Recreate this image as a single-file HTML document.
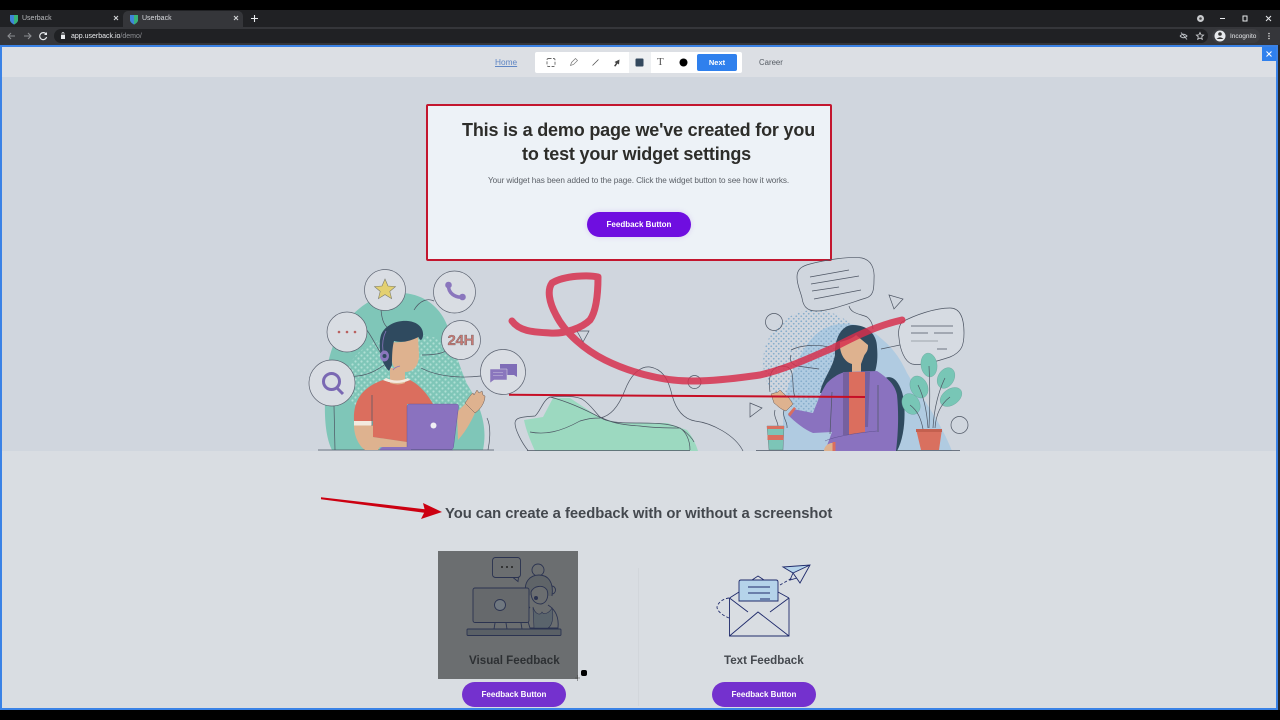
<!DOCTYPE html>
<html><head><meta charset="utf-8"><title>Userback</title>
<style>
html,body{margin:0;padding:0;width:1280px;height:720px;overflow:hidden;background:#000;font-family:"Liberation Sans",sans-serif}
.a{position:absolute}
.t{position:absolute;white-space:nowrap}
svg{position:absolute;left:0;top:0}
.l{fill:none;stroke:#4d5563;stroke-width:.7}
.b{position:absolute;border-radius:13px;color:#fff;font-weight:bold;font-size:8px;text-align:center;line-height:25px;width:104px;height:25px}
</style></head><body>
<div class="a" style="left:0;top:10px;width:1280px;height:17px;background:#202124"></div>
<div class="a" style="left:123px;top:11px;width:120px;height:16px;background:#35363a;border-radius:5px 5px 0 0"></div>
<div class="a" style="left:0;top:27px;width:1280px;height:18px;background:#35363a"></div>
<div class="a" style="left:54px;top:29px;width:1154px;height:14px;background:#202124;border-radius:7px"></div>
<div class="a" style="left:1212px;top:29px;width:48px;height:14px;background:#3c3d41;border-radius:7px"></div>
<div class="t" style="left:22px;top:15px;font-size:7px;color:#b8babd">Userback</div>
<div class="t" style="left:142px;top:15px;font-size:7px;color:#dadce0">Userback</div>
<div class="t" style="left:71px;top:33px;font-size:7px;color:#e8eaed">app.userback.io<span style="color:#8f9296">/demo/</span></div>
<div class="t" style="left:1230px;top:33px;font-size:6.500px;color:#e8eaed">Incognito</div>

<div class="a" style="left:0;top:45px;width:1278px;height:665px;background:#3a82e6"></div>
<div class="a" style="left:2px;top:47px;width:1274px;height:30px;background:#dcdfe4"></div>
<div class="a" style="left:2px;top:77px;width:1274px;height:374px;background:#d0d6de"></div>
<div class="a" style="left:2px;top:451px;width:1274px;height:257px;background:#d9dde2"></div>
<div class="a" style="left:1278px;top:45px;width:2px;height:665px;background:#26282c"></div>
<div class="a" style="left:1262px;top:47px;width:14px;height:14px;background:#2f80ed"></div>

<div class="t" style="left:495px;top:57px;font-size:8.300px;color:#5f86c4;text-decoration:underline">Home</div>
<div class="t" style="left:759px;top:57.500px;font-size:7.800px;color:#555b63">Career</div>
<div class="a" style="left:535px;top:52px;width:207px;height:21px;background:#fff;border-radius:2px"></div>
<div class="a" style="left:629px;top:52px;width:22px;height:21px;background:#eef0f2"></div>
<div class="a" style="left:697px;top:54px;width:40px;height:17px;background:#2f80ed;border-radius:2px;color:#fff;font-weight:bold;font-size:7.500px;text-align:center;line-height:17px">Next</div>
<div class="t" style="left:657px;top:56px;font-size:11px;color:#555;font-family:'Liberation Serif',serif">T</div>

<div class="a" style="left:426px;top:104px;width:401.500px;height:152.500px;background:#edf2f7;border:2px solid #c3162e;border-radius:2px"></div>
<div class="t" style="left:462px;top:120px;font-size:18px;font-weight:bold;color:#2d2d2a;letter-spacing:-.18px">This is a demo page we've created for you</div>
<div class="t" style="left:522px;top:144px;font-size:18px;font-weight:bold;color:#2d2d2a;letter-spacing:-.18px">to test your widget settings</div>
<div class="t" style="left:488px;top:176px;font-size:8.200px;color:#5a5f66;letter-spacing:-.08px">Your widget has been added to the page. Click the widget button to see how it works.</div>
<div class="b" style="left:587px;top:212px;background:#6f0ee0;box-shadow:0 0 6px rgba(111,14,224,.15)">Feedback Button</div>

<div class="t" style="left:445px;top:506px;font-size:14.800px;font-weight:bold;color:#44484e;letter-spacing:-.04px">You can create a feedback with or without a screenshot</div>

<svg width="1280" height="720" viewBox="0 0 1280 720">
<defs>
<pattern id="dl" width="6" height="6" patternUnits="userSpaceOnUse"><circle cx="1.500" cy="1.500" r="1.100" fill="#afdfd4"/><circle cx="4.500" cy="4.500" r="1.100" fill="#afdfd4"/></pattern>
<pattern id="dr" width="5" height="5" patternUnits="userSpaceOnUse"><circle cx="1.250" cy="1.250" r=".9" fill="#86adcc"/><circle cx="3.750" cy="3.750" r=".9" fill="#86adcc"/></pattern>
<clipPath id="cb"><path d="M332 450C323 432 324 400 327 372C330 340 350 305 385 295C412 288 437 300 447 325C453 345 460 368 467 384C480 405 488 425 483 450Z"/></clipPath>
</defs>
<!-- chrome icons -->
<path d="M10 15h8v5c0 2-2 3.500-4 4.500-2-1-4-2.500-4-4.500z" fill="#3f84d8"/><path d="M14 15h4v5c0 2-2 3.500-4 4.500z" fill="#38b27a"/>
<path d="M130 15h8v5c0 2-2 3.500-4 4.500-2-1-4-2.500-4-4.500z" fill="#3f84d8"/><path d="M134 15h4v5c0 2-2 3.500-4 4.500z" fill="#38b27a"/>
<path d="M114 16l4 4m0-4l-4 4M234 16l4 4m0-4l-4 4" stroke="#d0d2d5" stroke-width="1.100"/>
<path d="M254.500 15v7M251 18.500h7" stroke="#e8eaed" stroke-width="1.100"/>
<path d="M15 36H8m3-3l-3 3 3 3" fill="none" stroke="#8b8d91" stroke-width="1.100"/>
<path d="M24 36h7m-3-3l3 3-3 3" fill="none" stroke="#8b8d91" stroke-width="1.100"/>
<path d="M46 34a3.500 3.500 0 1 0 .6 3" fill="none" stroke="#e8eaed" stroke-width="1.200"/><path d="M47 32v3h-3z" fill="#e8eaed"/>
<rect x="61" y="35" width="4" height="4" fill="#e8eaed"/><path d="M62 35v-1.500a1 1 0 0 1 2 0V35" fill="none" stroke="#e8eaed" stroke-width=".7"/>
<circle cx="1200.500" cy="18.500" r="3.500" fill="#c9cbce"/><circle cx="1200.500" cy="18.500" r="1.300" fill="#444"/>
<path d="M1220 18.500h5" stroke="#e8eaed" stroke-width="1"/>
<rect x="1243" y="16" width="4" height="5" fill="none" stroke="#e8eaed"/>
<path d="M1266 16l5 5m0-5l-5 5" stroke="#e8eaed" stroke-width="1"/>
<path d="M1180 36q3.500-3.500 7 0q-3.500 3.500-7 0M1181 32.500l6 7" fill="none" stroke="#bdc1c6" stroke-width=".9"/>
<path d="M1200 32.500l1.100 2.400 2.500.2-1.900 1.700.6 2.500-2.300-1.300-2.300 1.300.6-2.500-1.900-1.700 2.500-.2z" fill="none" stroke="#d5d7da" stroke-width=".8"/>
<circle cx="1220" cy="36" r="5.500" fill="#e8eaed"/><circle cx="1220" cy="34" r="1.800" fill="#333"/><path d="M1216.500 39q3.500-3.500 7 0z" fill="#333"/>
<circle cx="1269" cy="33.500" r=".8" fill="#ddd"/><circle cx="1269" cy="36" r=".8" fill="#ddd"/><circle cx="1269" cy="38.500" r=".8" fill="#ddd"/>
<path d="M1266.500 51.500l5 5m0-5l-5 5" stroke="#fff" stroke-width="1"/>
<!-- toolbar icons -->
<rect x="547" y="58.500" width="8" height="8" rx="1.500" fill="none" stroke="#666" stroke-width=".9" stroke-dasharray="3 1.500"/>
<path d="M570.500 65.500l1-3 4-4 2 2-4 4z" fill="none" stroke="#777" stroke-width=".7"/>
<path d="M592.500 65.500l6-6" stroke="#555" stroke-width=".8"/>
<path d="M614 66l2-3-1.500-1 5-2.500-.5 5-1.500-1-2 3z" fill="#444"/>
<rect x="635.500" y="58.500" width="8" height="8" rx="1" fill="#34495e"/>
<circle cx="683.500" cy="62.500" r="4" fill="#000"/>

<!-- LEFT ILLUSTRATION -->
<path d="M332 450C323 432 324 400 327 372C330 340 350 305 385 295C412 288 437 300 447 325C453 345 460 368 467 384C480 405 488 425 483 450Z" fill="#7fc6b8"/>
<ellipse cx="410" cy="382" rx="65" ry="48" fill="url(#dl)" clip-path="url(#cb)"/>
<path class="l" d="M334 406L335 450M318 450H494M381 310C382 322 385 326 390 330M414 310C420 300 428 298 434 301M365 328C372 335 378 352 385 358M345 376C362 378 375 372 384 365M421 368C440 378 465 378 481 376M422 355C440 355 448 352 452 345M487 418C492 428 489 445 488 450"/>
<g fill="#d9dde3" stroke="#5b6270" stroke-width=".7">
<circle cx="385" cy="290" r="20.500"/><circle cx="454.500" cy="292" r="21"/><circle cx="347" cy="332" r="20"/><circle cx="461" cy="340" r="19.500"/><circle cx="503" cy="372" r="22.500"/><circle cx="332" cy="383" r="23"/>
</g>
<path d="M385 279l3 7 7.500.6-5.700 4.800 1.800 7.200-6.600-4-6.600 4 1.800-7.200-5.700-4.800 7.500-.6z" fill="#e3d071" stroke="#7c7c6a" stroke-width=".6"/>
<path d="M448.500 285C448 293 455 298 463 297" fill="none" stroke="#8a76bd" stroke-width="3.500" stroke-linecap="round"/>
<circle cx="448.500" cy="285" r="3.300" fill="#8a76bd"/><circle cx="462.500" cy="297" r="3.300" fill="#8a76bd"/>
<circle cx="339" cy="332" r="1.300" fill="#b9605f"/><circle cx="347" cy="332" r="1.300" fill="#b9605f"/><circle cx="355" cy="332" r="1.300" fill="#b9605f"/>
<text x="447.500" y="345" font-family="Liberation Sans" font-size="15" font-weight="bold" fill="#c87a75" stroke="#555" stroke-width=".3" textLength="27">24H</text>
<path d="M500 364h17v13l-3-2h-14z" fill="#7f6db7"/><path d="M490 369h17v11h-13l-4 3z" fill="#8a76bd" stroke="#d9dde3" stroke-width=".5"/>
<path d="M493 372.500h10M493 375.500h10" stroke="#c9c3df" stroke-width=".5"/>
<circle cx="331.500" cy="381.500" r="8" fill="none" stroke="#7a68b3" stroke-width="3"/><path d="M337 388l6 6" stroke="#7a68b3" stroke-width="3"/>
<!-- man -->
<path d="M354 425h19v12l34 5v5l-27 0-2 3h-13c-7-5-11-15-11-25z" fill="#deb28f"/>
<path d="M354 421C353 403 360 388 383 380Q397 386 410 380C420 385 428 395 433 404L407 404V442L373 437V421Z" fill="#db6e5e"/>
<path d="M354 421h18v4.500h-18z" fill="#f3eadf"/>
<path d="M390 368h15v15q-7 3-15 0z" fill="#deb28f"/>
<path d="M383 380Q397 386 410 380l-2-2q-11 5-22 0z" fill="#f3eadf"/>
<path d="M392 342Q405 344 418 336L419 355C419 365 414 372 405 372C398 372 392 368 392 360Z" fill="#deb28f"/>
<path d="M389 371C380 362 378 345 381 335C385 325 397 320 408 321C418 322 424 328 423 336C422 341 420 341 418.500 337Q405 344 394 341C392 348 392 360 392 365Z" fill="#2f4a5f"/>
<ellipse cx="384.500" cy="356" rx="4.500" ry="5.500" fill="#8a76bd"/><circle cx="384.500" cy="356" r="2" fill="#2f4a5f"/>
<path d="M383 351c-1-8 0-14 3-20" fill="none" stroke="#8a76bd" stroke-width=".8"/>
<path d="M393 370q2-3 7-4" fill="none" stroke="#8a76bd" stroke-width=".8"/>
<path class="l" d="M372 395v31"/>
<path d="M457 412l12-12 8 8c-4 10-10 22-19 32z" fill="#deb28f"/>
<path d="M465 403c3-4 6-9 8-10l1 2 3-5 2 3 3-2 1 4 2 1c0 6-4 13-10 17z" fill="#deb28f" stroke="#6a5a55" stroke-width=".5"/>
<path d="M407 407c0-2 1-3 3-3h46c2 0 2.500 1 2.500 3l-5 40c0 1-1 2-2 2.500H407z" fill="#8a72bf" stroke="#5e5090" stroke-width=".4"/>
<path d="M380 450c0-2 1-3 4-3h27v3z" fill="#8a72bf"/>
<path d="M380 450h73" stroke="#5e5090" stroke-width=".6"/>
<circle cx="433.500" cy="425.500" r="3" fill="#f1eff4"/>

<!-- MIDDLE -->
<path d="M524 420L543 417L553 398H570L600 418L620 423H667L687 430C692 436 696 444 698 451H535C530 440 526 430 524 420Z" fill="#9cd9c0"/>
<path class="l" d="M528 450.500C522 443 515 430 515 423C515 418 520 417 535 416C540 412 543 400 550 397C565 396 575 396 582 399C590 404 595 412 600 417C610 422 620 425 640 426C655 428 670 428 680 428C686 432 690 440 690 450M530 432C545 435 560 432 580 421C590 418 595 418 600 418C610 416 618 408 625 390C632 372 642 366 650 367C662 369 668 378 672 395C676 410 684 419 695 421C712 423 735 435 743 451M550 397C570 402 590 412 603 419C612 423 625 423 640 423C660 423 675 424 683 430C688 434 692 438 694 442M527 450.500H690"/>
<path class="l" d="M577 331l12 0-6 11z"/>
<circle class="l" cx="694.500" cy="382" r="6.500"/>

<!-- RIGHT -->
<path d="M783 451L783 407C790 375 800 350 815 335C832 320 860 318 883 340C895 350 902 362 907 373C920 395 940 420 952 451Z" fill="#b0cbe1"/>
<circle cx="815" cy="362" r="52" fill="url(#dr)"/>
<path class="l" d="M756 450.500H960"/>
<path class="l" d="M797 277C797 269 802 266 810 264C825 260 850 256 862 258C871 260 875 268 874 280C874 290 873 296 866 298C850 303 830 311 816 311C806 311 803 305 802 298C800 290 797 285 797 277Z"/>
<path class="l" d="M810 277L849 270M811 284L859 276M812 291L839 287M814 299L861 290"/>
<path class="l" d="M889 295l14 4-9 10z"/>
<circle class="l" cx="774" cy="322" r="8.500"/>
<circle class="l" cx="959.500" cy="425" r="8.500"/>
<path class="l" d="M849 306c2 8 12 8 18 11 4 3 6 8 6 12M900 345l-19 4"/>
<path d="M902 322C915 315 935 308 950 308C960 308 964 318 964 333C964 345 962 352 950 357C935 362 920 366 912 364C905 362 900 350 899 338C898 332 899 326 902 322Z" fill="#d6dbe2" stroke="#4d5563" stroke-width=".7"/>
<path class="l" d="M911 326H953M911 333H928M934 333H953M937 349H947"/><path d="M911 341H938" stroke="#9ea4ac" stroke-width="1"/>
<path class="l" d="M791 350c10-5 25-6 38-3M791 355c-2 5 0 9 6 11l22 3"/>
<path class="l" d="M770 392c-2-14 0-25 12-26 12 0 10 10 11 17 0 8 2 14 2 14M775 410c-2 8 4 12 3 18-1 5 1 10 0 14M784 410c-2 8 4 12 3 18"/>
<path d="M767 426h17l-1 24h-14z" fill="#7cc5b7" stroke="#5a6b70" stroke-width=".4"/><path d="M767.500 435h16v5h-16z" fill="#d9705f"/><path d="M767 426h17v3h-17z" fill="#d9705f"/>
<path class="l" d="M750 403l12 5-12 9z"/>
<!-- woman -->
<path d="M820 393C822 380 832 370 835 355C834 342 840 325 853 325C868 325 877 335 877 347C878 358 877 365 875 372L860 395Z" fill="#2f4a5f"/>
<path d="M885 378C892 375 898 380 902 392C906 405 906 435 897 451H885Z" fill="#2f4a5f"/>
<path d="M840 342C848 340 853 338 856 335L868 345C868 352 866 352 864 356L861 364V372H852V364C844 362 839 352 840 342Z" fill="#deb28f"/>
<path d="M788 415L793 409L813 413C818 400 822 390 827 383C833 377 840 373 845 372L877 371C888 378 895 385 897 395C899 415 898 435 896 451H825L832 432L813 433C805 430 795 422 788 415Z" fill="#8a72bf"/>
<path d="M843 372h6v63h-6zM865 372h5l-2 55h-3z" fill="#75609f"/>
<path d="M849 372h16v60l-16 3z" fill="#db6e5e"/>
<path d="M825 441c8-4 30-8 52-10" fill="none" stroke="#5e5090" stroke-width=".5"/>
<path d="M824 451c0-4 3-7 7-8l3 0v8z" fill="#deb28f"/>
<path d="M834 451v-9" stroke="#db6e5e" stroke-width="3"/>
<path class="l" d="M832 392l-2 42M878 385l0 47"/>
<path d="M771 394l7-2 2-2 4 4 5 4 4 6-7 7c-6-2-8-5-12-8z" fill="#deb28f" stroke="#6a5a55" stroke-width=".5"/>
<path d="M788 414l6-7 2 1.500-6 8z" fill="#db6e5e"/>
<!-- plant -->
<path d="M916 429H942L939 450H921Z" fill="#d9705f"/><path d="M916 429H942V432H916Z" fill="#c4604f"/>
<g fill="#78c6b6" stroke="#5c9a90" stroke-width=".3">
<ellipse cx="929" cy="365" rx="8" ry="12" transform="rotate(-8 929 365)"/>
<ellipse cx="919" cy="387" rx="8.500" ry="11.500" transform="rotate(-25 919 387)"/>
<ellipse cx="946" cy="378" rx="8" ry="11" transform="rotate(30 946 378)"/>
<ellipse cx="951" cy="397" rx="8" ry="12" transform="rotate(55 951 397)"/>
<ellipse cx="911" cy="404" rx="8.500" ry="11" transform="rotate(-30 911 404)"/>
</g>
<path class="l" d="M929 366c1 20 1 40 0 62M918 385c6 12 9 28 10 43M945 378c-6 12-11 30-12 50M950 397c-8 6-14 16-15 31M910 405c8 6 11 14 13 24"/>

<!-- annotations -->
<path d="M512 321C520 332 535 332 550 333C565 334 582 328 590 320C597 310 598 290 598 277C590 275 565 275 552 283C547 290 549 302 556 315C565 333 585 350 605 360C625 370 660 382 695 381C720 381 745 377 760 375C790 368 815 355 833 348C850 339 875 326 902 320" fill="none" stroke="#d62f4c" stroke-width="7" stroke-linecap="round" stroke-linejoin="round" opacity=".84"/>
<path d="M509 394.800L865 397" stroke="#c60f26" stroke-width="2"/>
<path d="M321 497.200L427 509.500 426 513 321 499.200Z" fill="#cc0011"/>
<path d="M423 503L442 512 421 519 425 511z" fill="#cc0011"/>

<!-- lower -->
<path d="M638.500 568V706" stroke="#d2d6db" stroke-width="1"/>
<rect x="438" y="551" width="140" height="128" fill="#6b6e70"/>
<g fill="none" stroke="#2b3350" stroke-width=".9">
<rect x="492.500" y="557.500" width="28" height="20" rx="3"/><path d="M513 577.500l5 4 .5-4"/>
<circle cx="538" cy="570" r="6"/>
<path d="M526 595C523 582 530 575 539 575C548 575 554 582 552 596" fill="#5f6468"/>
<path d="M531 592C533 586 543 584 547 590C549 596 547 603 541 604C535 604 531 600 531 592Z" fill="#6b6e70"/>
<path d="M552 586a3.500 4 0 0 1 0 8"/>
<path d="M530 607C525 612 528 622 530 628H558C559 618 556 610 548 605"/>
<path d="M533 607C535 614 540 616 542 612C544 616 550 612 552 608C554 618 552 626 548 628H534Z" fill="#5a646c" stroke-width=".6"/>
<rect x="473" y="588" width="56" height="34.500" rx="2" fill="#66696c"/>
<circle cx="500" cy="605" r="5.500" fill="#707880"/>
<path d="M495 623l-1 6M506 623l1 6M521 623l1 6"/>
<rect x="467" y="629" width="94" height="6.500" rx="1" fill="#5a6066"/>
</g>
<circle cx="536" cy="598" r="2" fill="#2b3350"/>
<circle cx="502" cy="567" r="1" fill="#222"/><circle cx="507" cy="567" r="1" fill="#222"/><circle cx="512" cy="567" r="1" fill="#222"/>
<rect x="581" y="670" width="6" height="6" rx="2" fill="#000"/>
<path d="M577.500 675v6M575 678h5" stroke="#444" stroke-width=".5"/>
<!-- envelope -->
<path d="M739 582c0-1.500 1-2 2-2h35c1.500 0 2 .5 2 2V601H739Z" fill="#b5d3ea" stroke="#1f2a6b" stroke-width=".9"/>
<path d="M783 567L810 565L793 573Z" fill="#b5d3ea"/>
<g fill="none" stroke="#1f2a6b" stroke-width=".9">
<path d="M729.500 598L739 592M789 598L778 592M729.500 598V636H789V598M729.500 636L758 612 789 636M729.500 598L748 612M789 598L770 612M752 580L758 576 764 580"/>
<path d="M748 587H770M748 593H770M760 599H770"/>
<path d="M783 567L810 565L800 583L793 573ZM810 565L793 573M793 573L790 580L797 578"/>
<path d="M729 598c-7 1-11 5-12 9 0 4 5 8 12 11M780 585l12-7" stroke-dasharray="3 2"/>
</g>
</svg>

<div class="t" style="left:469px;top:654px;font-size:11.600px;font-weight:bold;color:#2d3033">Visual Feedback</div>
<div class="t" style="left:724px;top:654px;font-size:11.600px;font-weight:bold;color:#44484e">Text Feedback</div>
<div class="b" style="left:462px;top:682px;background:#7431ce">Feedback Button</div>
<div class="b" style="left:712px;top:682px;background:#7431ce">Feedback Button</div>
</body></html>
